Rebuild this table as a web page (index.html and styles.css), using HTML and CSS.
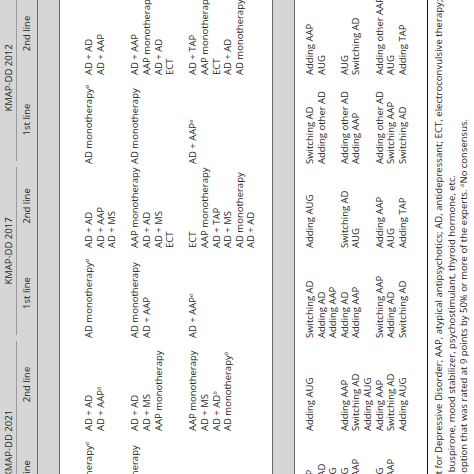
FILE: index.html
```html
<!DOCTYPE html>
<html>
<head>
<meta charset="utf-8">
<link rel="stylesheet" href="styles.css">
</head>
<body>
<div class="viewport">
  <div class="sheet">
    <table class="tbl">
      <colgroup>
        <col class="c-label"><col class="c-21a"><col class="c-21b"><col class="c-17a"><col class="c-17b"><col class="c-12a"><col class="c-12b">
      </colgroup>
      <thead>
        <tr class="grp">
          <th class="blank"></th>
          <th colspan="2" class="grp-h g21">KMAP-DD 2021</th>
          <th colspan="2" class="grp-h">KMAP-DD 2017</th>
          <th colspan="2" class="grp-h">KMAP-DD 2012</th>
        </tr>
        <tr class="sub">
          <th class="lab-h">Clinical situation</th>
          <th>1st line</th><th>2nd line</th>
          <th>1st line</th><th>2nd line</th>
          <th>1st line</th><th>2nd line</th>
        </tr>
      </thead>
      <tbody>
        <tr class="section"><td colspan="7">Initial treatment</td></tr>
        <tr class="rA">
          <td class="lab">Mild to moderate</td>
          <td>AD monotherapy<sup>a</sup></td>
          <td>AD + AD<br>AD + AAP<sup>b</sup></td>
          <td>AD monotherapy<sup>a</sup></td>
          <td>AD + AD<br>AD + AAP<br>AD + MS</td>
          <td>AD monotherapy<sup>a</sup></td>
          <td>AD + AD<br>AD + AAP</td>
        </tr>
        <tr class="rB">
          <td class="lab">Severe</td>
          <td>AD monotherapy<br>AD + AAP</td>
          <td>AD + AD<br>AD + MS<br>AAP monotherapy</td>
          <td>AD monotherapy<br>AD + AAP</td>
          <td>AAP monotherapy<br>AD + AD<br>AD + MS<br>ECT</td>
          <td>AD monotherapy</td>
          <td>AD + AAP<br>AAP monotherapy<br>AD + AD<br>ECT</td>
        </tr>
        <tr class="rC">
          <td class="lab">Psychotic</td>
          <td>AD + AAP<sup>a</sup></td>
          <td>AAP monotherapy<br>AD + MS<br>AD + AD<sup>b</sup><br>AD monotherapy<sup>b</sup></td>
          <td>AD + AAP<sup>a</sup></td>
          <td>ECT<br>AAP monotherapy<br>AD + TAP<br>AD + MS<br>AD monotherapy<br>AD + AD</td>
          <td>AD + AAP<sup>a</sup></td>
          <td>AD + TAP<br>AAP monotherapy<br>ECT<br>AD + AD<br>AD monotherapy</td>
        </tr>
        <tr class="section sec2"><td colspan="7">Nonresponse</td></tr>
        <tr class="rD">
          <td class="lab">Step 1</td>
          <td>Adding AAP<br>Switching AD<br>Adding AUG</td>
          <td>Adding AUG</td>
          <td>Switching AD<br>Adding AD<br>Adding AAP</td>
          <td>Adding AUG</td>
          <td>Switching AD<br>Adding other AD</td>
          <td>Adding AAP<br>AUG</td>
        </tr>
        <tr class="rE">
          <td class="lab">Step 2</td>
          <td>Adding AUG<br>Switching AAP</td>
          <td>Adding AAP<br>Switching AD<br>Adding AUG</td>
          <td>Adding AD<br>Adding AAP</td>
          <td>Switching AD<br>AUG</td>
          <td>Adding other AD<br>Adding AAP</td>
          <td>AUG<br>Switching AD</td>
        </tr>
        <tr class="rF">
          <td class="lab">Step 3</td>
          <td>Adding AUG<br>Switching AAP</td>
          <td>Adding AAP<br>Switching AD<br>Adding AUG</td>
          <td>Switching AAP<br>Adding AD<br>Switching AD</td>
          <td>Adding AAP<br>AUG<br>Adding TAP</td>
          <td>Adding other AD<br>Switching AAP<br>Switching AD</td>
          <td>Adding other AAP<br>AUG<br>Adding TAP</td>
        </tr>
      </tbody>
    </table>
    <div class="notes">
      <p class="n1">KMAP-DD, Korean Medication Algorithm Project for Depressive Disorder; AAP, atypical antipsychotics; AD, antidepressant; ECT, electroconvulsive therapy;</p>
      <p class="n2">TAP, typical antipsychotics; AUG, augmentation with buspirone, mood stabilizer, psychostimulant, thyroid hormone, etc.</p>
      <p class="n3"><sup>a</sup>Treatment of choice, defined as a treatment option that was rated at 9 points by 50% or more of the experts. <sup>b</sup>No consensus.</p>
    </div>
  </div>
</div>
</body>
</html>
```

FILE: styles.css
```css
html, body {
  margin: 0;
  padding: 0;
  background: #ffffff;
}

.viewport {
  width: 474px;
  height: 474px;
  overflow: hidden;
}

/* the printed table is turned a quarter turn counter-clockwise */
.sheet {
  width: 689px;
  transform-origin: 0 0;
  transform: translate(0, 681px) rotate(-90deg);
  font-family: "Open Sans", "Noto Sans", sans-serif;
  font-size: 9.5px;
  color: #262626;
}

.tbl {
  border-collapse: collapse;
  table-layout: fixed;
  width: 689px;
}

.c-label { width: 160px; }
.c-21a { width: 90px; }
.c-21b { width: 93px; }
.c-17a { width: 90px; }
.c-17b { width: 84px; }
.c-12a { width: 89px; }
.c-12b { width: 83px; }

.tbl th,
.tbl td {
  padding: 0;
  vertical-align: top;
  text-align: left;
  font-weight: normal;
  line-height: 11.6px;
  white-space: nowrap;
}

.tbl thead th {
  background: #d6d6d6;
  text-align: center;
}

.grp th {
  height: 17px;
  line-height: 17px;
  vertical-align: middle;
}

.grp th.grp-h {
  background:
    linear-gradient(#9c9c9c, #9c9c9c) center bottom / calc(100% - 6px) 1px no-repeat,
    #d6d6d6;
}

.grp th.g21 {
  padding-right: 28px;
}

.sub th {
  height: 20px;
  line-height: 20px;
  vertical-align: middle;
  border-bottom: 1px solid #6a6a6a;
}

.sub th.lab-h {
  text-align: left;
}

.lab {
  white-space: normal;
}

.section td {
  background: #d6d6d6;
  height: 21px;
  border-bottom: 1px solid #6a6a6a;
  line-height: 21px;
  vertical-align: middle;
}

.sec2 td {
  border-top: 1px solid #6a6a6a;
}

sup {
  font-size: 6px;
  font-style: italic;
  line-height: 0;
  vertical-align: 3px;
}

.rA td { padding-top: 23px; height: 46.4px; }
.rB td { height: 58px; }
.rC td { height: 69.6px; padding-bottom: 15px; }
.rD td { padding-top: 9px; height: 34.8px; }
.rE td { height: 34.8px; }
.rF td { height: 34.8px; padding-bottom: 19px; }

.notes {
  border-top: 1.5px solid #111111;
  padding-top: 5px;
  white-space: nowrap;
  line-height: 12.5px;
}

.notes p {
  margin: 0;
}

.notes .n1 {
  text-indent: -3px;
  letter-spacing: 0.05px;
}

.notes .n2 {
  text-indent: -23px;
}

.notes .n3 {
  text-indent: 8px;
}
```
